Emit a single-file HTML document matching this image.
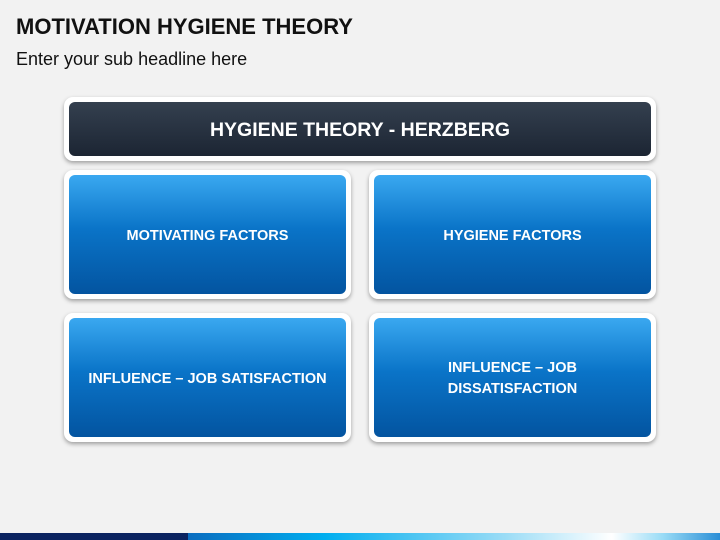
<!DOCTYPE html>
<html><head><style>
body{margin:0;width:720px;height:540px;background:#f2f2f2;position:relative;overflow:hidden;font-family:"Liberation Sans",sans-serif}
h1{position:absolute;left:16px;top:14px;margin:0;font-size:22px;font-weight:bold;color:#111}
.sub{position:absolute;left:16px;top:49px;font-size:18px;color:#111}
.o{position:absolute;background:#fff;border-radius:9px;box-shadow:0 2px 4px rgba(0,0,0,.35)}
.i{position:absolute;left:5px;top:5px;right:5px;bottom:5px;padding-top:3px;box-sizing:border-box;border-radius:6px;display:flex;align-items:center;justify-content:center;text-align:center;color:#fff;font-weight:bold;font-size:14.5px;line-height:21px}
.b{background:linear-gradient(#3aa8f0,#0a74c8 45%,#0354a0)}
.d{background:linear-gradient(#34404f,#1c2533);font-size:19.5px}
.bar{position:absolute;bottom:0;height:7px;left:0;width:720px;background:linear-gradient(90deg,#0a6cbf 26%,#00aeef 45%,#9adcf6 70%,#fff 85%,#9adcf6 92%,#2a8ed6)}
</style></head><body>
<h1>MOTIVATION HYGIENE THEORY</h1>
<div class="sub">Enter your sub headline here</div>
<div class="o" style="left:64px;top:97px;width:592px;height:64px"><div class="i d">HYGIENE THEORY - HERZBERG</div></div>
<div class="o" style="left:64px;top:170px;width:287px;height:129px"><div class="i b">MOTIVATING FACTORS</div></div>
<div class="o" style="left:369px;top:170px;width:287px;height:129px"><div class="i b">HYGIENE FACTORS</div></div>
<div class="o" style="left:64px;top:313px;width:287px;height:129px"><div class="i b">INFLUENCE – JOB SATISFACTION</div></div>
<div class="o" style="left:369px;top:313px;width:287px;height:129px"><div class="i b">INFLUENCE – JOB<br>DISSATISFACTION</div></div>
<div class="bar"></div>
<div style="position:absolute;bottom:0;left:0;width:188px;height:7px;background:#0b2360"></div>
</body></html>
